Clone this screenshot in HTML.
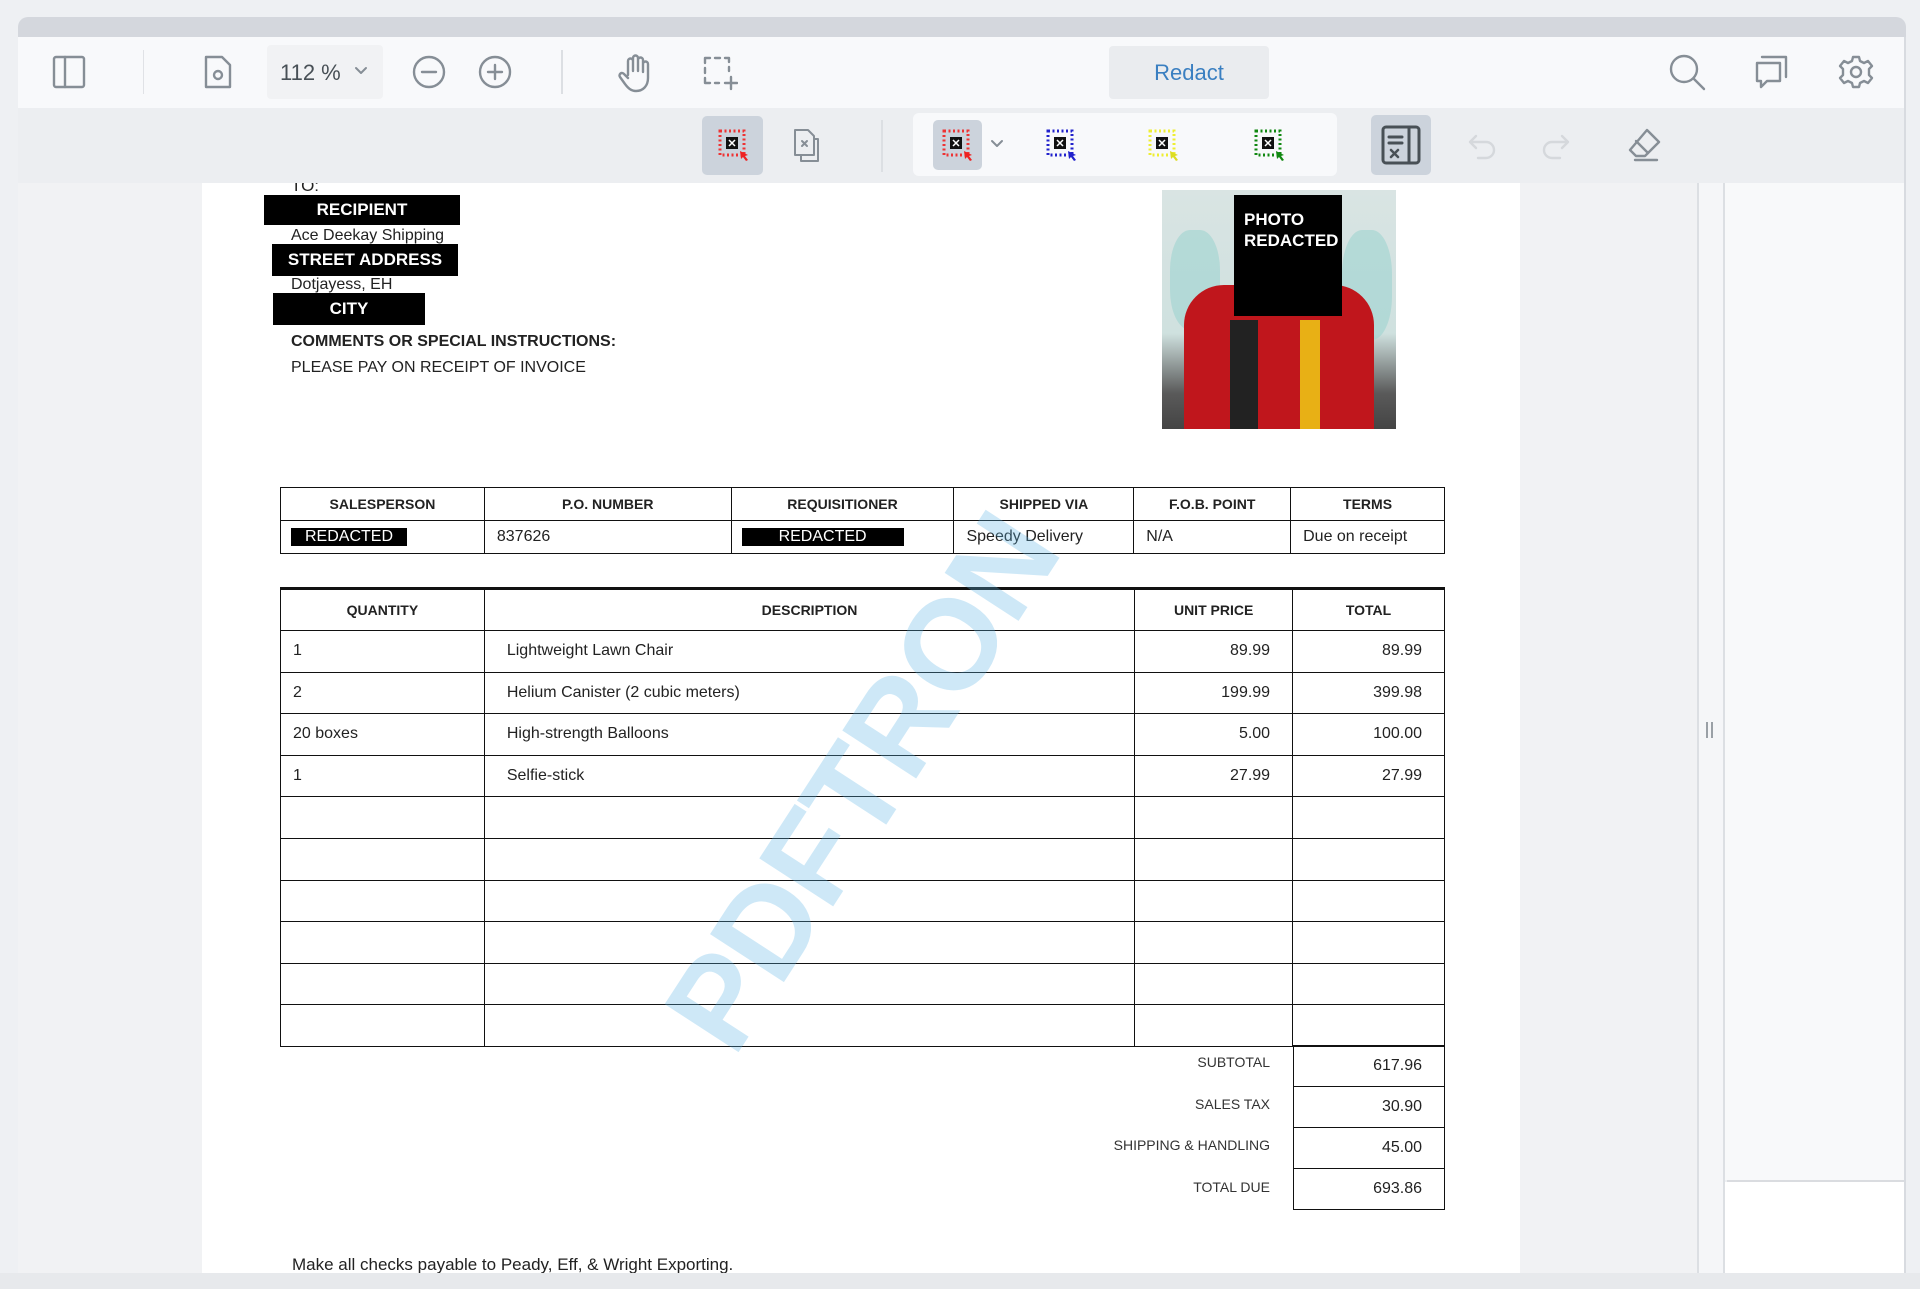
<!DOCTYPE html>
<html><head><meta charset="utf-8">
<style>
*{box-sizing:border-box;margin:0;padding:0}
body{width:1920px;height:1289px;overflow:hidden;background:#eef0f3;font-family:"Liberation Sans",sans-serif;position:relative}
.abs{position:absolute}
.strip{left:18px;top:17px;width:1888px;height:22px;background:#d4d7dd;border-radius:10px 10px 0 0}
.header{left:18px;top:37px;width:1888px;height:71px;background:#f8f9fb}
.bar2{left:18px;top:108px;width:1888px;height:75px;background:#eceef1}
.view{left:18px;top:183px;width:1679px;height:1090px;background:#f1f2f4}
.page{left:202px;top:183px;width:1318px;height:1090px;background:#fff;overflow:hidden}
.bottom{left:0;top:1273px;width:1920px;height:16px;background:#e7e9ec}
svg.ic{position:absolute;fill:none;stroke:#868e96;stroke-width:2.4;stroke-linecap:round;stroke-linejoin:round}
.doc{position:absolute;color:#222;font-size:16px;white-space:nowrap}
.red{position:absolute;background:#000;color:#fff;font-weight:bold;font-size:17px;text-align:center}
table{position:absolute;border-collapse:collapse;font-size:16px;color:#222}
td{border:1.5px solid #111;padding:0}
th{border:1.5px solid #111;font-size:14px;font-weight:bold;text-align:center}
.r{text-align:right;padding-right:22px}
.l{padding-left:12px}
.d{padding-left:22px}
</style></head><body>
<div class="abs strip"></div>
<div class="abs header"></div>
<div class="abs bar2"></div>
<div class="abs view"></div>

<svg class="ic" style="left:52px;top:55px" width="34" height="34" viewBox="0 0 34 34"><rect x="2" y="2" width="30" height="30" rx="2"/><line x1="13" y1="2" x2="13" y2="32"/></svg>
<div class="abs" style="left:143px;top:50px;width:1px;height:44px;background:#e0e2e6"></div>
<svg class="ic" style="left:203px;top:54px" width="30" height="36" viewBox="0 0 30 36"><path d="M3 3h16l8 8v22H3z"/><circle cx="15" cy="21" r="4"/></svg>
<div class="abs" style="left:267px;top:45px;width:116px;height:54px;background:#f1f2f4;border-radius:4px"></div>
<div class="abs" style="left:280px;top:60px;font-size:22px;color:#485056">112 %</div>
<svg class="ic" style="left:354px;top:66px;stroke-width:2" width="14" height="10" viewBox="0 0 14 10"><path d="M2 2l5 5 5-5"/></svg>
<svg class="ic" style="left:412px;top:55px" width="34" height="34" viewBox="0 0 34 34"><circle cx="17" cy="17" r="15"/><line x1="10" y1="17" x2="24" y2="17"/></svg>
<svg class="ic" style="left:478px;top:55px" width="34" height="34" viewBox="0 0 34 34"><circle cx="17" cy="17" r="15"/><line x1="10" y1="17" x2="24" y2="17"/><line x1="17" y1="10" x2="17" y2="24"/></svg>
<div class="abs" style="left:561px;top:50px;width:2px;height:44px;background:#dcdfe3"></div>
<svg class="ic" style="left:618px;top:53px" width="36" height="40" viewBox="0 0 36 40"><path d="M10 22V8a2.5 2.5 0 015 0v10V5a2.5 2.5 0 015 0v13V7a2.5 2.5 0 015 0v12V11a2.5 2.5 0 015 0v14c0 8-5 13-12 13-5 0-8-3-11-7l-5-7a2.5 2.5 0 014-3l4 4"/></svg>
<svg class="ic" style="left:702px;top:55px" width="36" height="36" viewBox="0 0 36 36"><path d="M3 8V3h5M13 3h5M23 3h4v4M27 12v4M3 13v5M3 23v5h5M13 28h4M29 22v12M23 28h12"/></svg>
<div class="abs" style="left:1109px;top:46px;width:160px;height:53px;background:#eaecef;border-radius:4px"></div>
<div class="abs" style="left:1109px;top:60px;width:160px;text-align:center;font-size:22px;color:#3a7fc1">Redact</div>
<svg class="ic" style="left:1668px;top:53px" width="40" height="40" viewBox="0 0 40 40"><circle cx="16" cy="16" r="13"/><line x1="26" y1="26" x2="36" y2="36"/></svg>
<svg class="ic" style="left:1754px;top:54px" width="36" height="36" viewBox="0 0 36 36"><path d="M8 3h24v20"/><path d="M3 9h23v18H13l-6 6v-6H3z"/></svg>
<svg class="ic" style="left:1838px;top:54px" width="36" height="36" viewBox="0 0 36 36"><circle cx="18" cy="18" r="5"/><path d="M15 3h6l1 4 4 2 4-2 4 5-3 3v6l3 3-4 5-4-2-4 2-1 4h-6l-1-4-4-2-4 2-4-5 3-3v-6l-3-3 4-5 4 2 4-2z"/></svg>

<div class="abs" style="left:702px;top:116px;width:61px;height:59px;background:#ccd3dc;border-radius:5px"></div>
<svg class="abs" style="left:718px;top:129px" width="32" height="34" viewBox="0 0 32 34"><rect x="2" y="2" width="24" height="24" fill="none" stroke="#e33" stroke-width="3" stroke-dasharray="2 2.5"/><rect x="8" y="8" width="12" height="12" fill="#111"/><path d="M11 11l6 6M17 11l-6 6" stroke="#fff" stroke-width="1.5"/><path d="M22 22l8 4-3 1 3 4-2 1-3-4-2 2z" fill="#e22"/></svg>
<svg class="ic" style="left:792px;top:127px;stroke-width:2" width="30" height="36" viewBox="0 0 30 36"><path d="M3 3h13l6 6v19H3z"/><path d="M22 12h4v22H9v-5"/><path d="M10 14l5 5M15 14l-5 5"/></svg>
<div class="abs" style="left:881px;top:120px;width:2px;height:52px;background:#dcdfe3"></div>
<div class="abs" style="left:913px;top:113px;width:424px;height:63px;background:#f8f9fb;border-radius:6px"></div>
<div class="abs" style="left:933px;top:120px;width:49px;height:50px;background:#ccd3dc;border-radius:5px"></div>
<svg class="abs" style="left:942px;top:129px" width="32" height="34" viewBox="0 0 32 34"><rect x="2" y="2" width="24" height="24" fill="none" stroke="#e33" stroke-width="3" stroke-dasharray="2 2.5"/><rect x="8" y="8" width="12" height="12" fill="#111"/><path d="M11 11l6 6M17 11l-6 6" stroke="#fff" stroke-width="1.5"/><path d="M22 22l8 4-3 1 3 4-2 1-3-4-2 2z" fill="#e22"/></svg>
<svg class="ic" style="left:990px;top:139px;stroke-width:2" width="14" height="10" viewBox="0 0 14 10"><path d="M2 2l5 5 5-5"/></svg>
<svg class="abs" style="left:1046px;top:129px" width="32" height="34" viewBox="0 0 32 34"><rect x="2" y="2" width="24" height="24" fill="none" stroke="#22c" stroke-width="3" stroke-dasharray="2 2.5"/><rect x="8" y="8" width="12" height="12" fill="#111"/><path d="M11 11l6 6M17 11l-6 6" stroke="#fff" stroke-width="1.5"/><path d="M22 22l8 4-3 1 3 4-2 1-3-4-2 2z" fill="#22c"/></svg>
<svg class="abs" style="left:1148px;top:129px" width="32" height="34" viewBox="0 0 32 34"><rect x="2" y="2" width="24" height="24" fill="none" stroke="#ee3" stroke-width="3" stroke-dasharray="2 2.5"/><rect x="8" y="8" width="12" height="12" fill="#111"/><path d="M11 11l6 6M17 11l-6 6" stroke="#fff" stroke-width="1.5"/><path d="M22 22l8 4-3 1 3 4-2 1-3-4-2 2z" fill="#dd2"/></svg>
<svg class="abs" style="left:1254px;top:129px" width="32" height="34" viewBox="0 0 32 34"><rect x="2" y="2" width="24" height="24" fill="none" stroke="#181" stroke-width="3" stroke-dasharray="2 2.5"/><rect x="8" y="8" width="12" height="12" fill="#111"/><path d="M11 11l6 6M17 11l-6 6" stroke="#fff" stroke-width="1.5"/><path d="M22 22l8 4-3 1 3 4-2 1-3-4-2 2z" fill="#181"/></svg>
<div class="abs" style="left:1371px;top:115px;width:60px;height:60px;background:#ccd3dc;border-radius:5px"></div>
<svg class="ic" style="left:1381px;top:125px;stroke:#485056;stroke-width:3" width="40" height="40" viewBox="0 0 40 40"><rect x="2" y="2" width="36" height="36" rx="3"/><line x1="28" y1="2" x2="28" y2="38"/><line x1="8" y1="12" x2="21" y2="12"/><line x1="8" y1="18" x2="21" y2="18"/><path d="M10 25l7 7M17 25l-7 7" stroke-width="2.5"/></svg>
<svg class="ic" style="left:1462px;top:132px;stroke:#d5d8dc" width="34" height="28" viewBox="0 0 34 28"><path d="M8 10h16a8 8 0 010 16h-8M8 10l6-6M8 10l6 6"/></svg>
<svg class="ic" style="left:1542px;top:132px;stroke:#d5d8dc" width="34" height="28" viewBox="0 0 34 28"><path d="M26 10H10a8 8 0 000 16h8M26 10l-6-6M26 10l-6 6"/></svg>
<svg class="ic" style="left:1627px;top:127px" width="36" height="36" viewBox="0 0 36 36"><path d="M20 3l12 12-14 14H9l-6-6z"/><path d="M9 14l12 12"/><line x1="8" y1="33" x2="30" y2="33"/></svg>

<div class="abs" style="left:1697px;top:183px;width:2px;height:1090px;background:#dcdfe3"></div>
<div class="abs" style="left:1699px;top:183px;width:24px;height:1090px;background:#f5f6f8"></div>
<div class="abs" style="left:1706px;top:722px;width:2px;height:16px;background:#9aa0a6"></div>
<div class="abs" style="left:1711px;top:722px;width:2px;height:16px;background:#9aa0a6"></div>
<div class="abs" style="left:1723px;top:183px;width:2px;height:1090px;background:#dcdfe3"></div>
<div class="abs" style="left:1725px;top:183px;width:180px;height:997px;background:#f8f9fa"></div>
<div class="abs" style="left:1727px;top:1180px;width:178px;height:2px;background:#dadce0"></div>
<div class="abs" style="left:1725px;top:1182px;width:180px;height:91px;background:#fff"></div>
<div class="abs" style="left:1904px;top:37px;width:2px;height:1236px;background:#d8dbe0"></div>

<div class="abs page">
  <div style="position:absolute;left:-202px;top:-183px;width:1920px;height:1289px">
  <div class="doc" style="left:291px;top:176px;font-size:17px">TO:</div>
  <div class="red" style="left:264px;top:195px;width:196px;height:30px;line-height:30px">RECIPIENT</div>
  <div class="doc" style="left:291px;top:227px">Ace Deekay Shipping</div>
  <div class="red" style="left:272px;top:244px;width:186px;height:32px;line-height:32px">STREET ADDRESS</div>
  <div class="doc" style="left:291px;top:276px">Dotjayess, EH</div>
  <div class="red" style="left:273px;top:293px;width:152px;height:32px;line-height:32px">CITY</div>
  <div class="doc" style="left:291px;top:333px;font-weight:bold">COMMENTS OR SPECIAL INSTRUCTIONS:</div>
  <div class="doc" style="left:291px;top:359px">PLEASE PAY ON RECEIPT OF INVOICE</div>

  <div class="abs" style="left:1162px;top:190px;width:234px;height:239px;background:linear-gradient(#d9e4e3 0%,#cfe1df 60%,#5a5a5a 85%,#444 100%);overflow:hidden">
    <div class="abs" style="left:8px;top:40px;width:50px;height:100px;background:#9fd4d0;opacity:.6;border-radius:40%"></div>
    <div class="abs" style="left:180px;top:40px;width:50px;height:110px;background:#9fd4d0;opacity:.6;border-radius:40%"></div>
    <div class="abs" style="left:22px;top:95px;width:190px;height:160px;background:#c0161c;border-radius:40px 40px 0 0"></div>
    <div class="abs" style="left:68px;top:130px;width:28px;height:120px;background:#222"></div>
    <div class="abs" style="left:138px;top:130px;width:20px;height:120px;background:#e8b015"></div>
  </div>
  <div class="red" style="left:1234px;top:195px;width:108px;height:121px;text-align:left;padding:14px 0 0 10px;line-height:21px;font-size:17px">PHOTO<br>REDACTED</div>

  <table style="left:280px;top:487px;width:1165px">
    <tr style="height:33px"><th style="width:204px">SALESPERSON</th><th style="width:247px">P.O. NUMBER</th><th style="width:223px">REQUISITIONER</th><th style="width:180px">SHIPPED VIA</th><th style="width:157px">F.O.B. POINT</th><th style="width:154px">TERMS</th></tr>
    <tr style="height:33px"><td style="padding-left:10px"><span style="background:#000;color:#fff;display:inline-block;width:116px;text-align:center;font-size:16px">REDACTED</span></td><td class="l">837626</td><td style="padding-left:10px"><span style="background:#000;color:#fff;display:inline-block;width:162px;text-align:center;font-size:16px">REDACTED</span></td><td class="l">Speedy Delivery</td><td class="l">N/A</td><td class="l">Due on receipt</td></tr>
  </table>

  <table style="left:280px;top:587px;width:1165px;border-top:3px solid #111">
    <tr style="height:42px"><th style="width:204px">QUANTITY</th><th style="width:651px">DESCRIPTION</th><th style="width:158px">UNIT PRICE</th><th style="width:152px">TOTAL</th></tr>
    <tr style="height:41.6px"><td class="l">1</td><td class="d">Lightweight Lawn Chair</td><td class="r">89.99</td><td class="r">89.99</td></tr>
    <tr style="height:41.6px"><td class="l">2</td><td class="d">Helium Canister (2 cubic meters)</td><td class="r">199.99</td><td class="r">399.98</td></tr>
    <tr style="height:41.6px"><td class="l">20 boxes</td><td class="d">High-strength Balloons</td><td class="r">5.00</td><td class="r">100.00</td></tr>
    <tr style="height:41.6px"><td class="l">1</td><td class="d">Selfie-stick</td><td class="r">27.99</td><td class="r">27.99</td></tr>
    <tr style="height:41.6px"><td></td><td></td><td></td><td></td></tr>
    <tr style="height:41.6px"><td></td><td></td><td></td><td></td></tr>
    <tr style="height:41.6px"><td></td><td></td><td></td><td></td></tr>
    <tr style="height:41.6px"><td></td><td></td><td></td><td></td></tr>
    <tr style="height:41.6px"><td></td><td></td><td></td><td></td></tr>
    <tr style="height:41.6px"><td></td><td></td><td></td><td></td></tr>
  </table>

  <table style="left:1293px;top:1045px;width:152px">
    <tr style="height:41px"><td class="r">617.96</td></tr>
    <tr style="height:41px"><td class="r">30.90</td></tr>
    <tr style="height:41px"><td class="r">45.00</td></tr>
    <tr style="height:41px"><td class="r">693.86</td></tr>
  </table>
  <div class="doc" style="left:900px;top:1054px;width:370px;text-align:right;font-size:14px;color:#333">SUBTOTAL</div>
  <div class="doc" style="left:900px;top:1096px;width:370px;text-align:right;font-size:14px;color:#333">SALES TAX</div>
  <div class="doc" style="left:900px;top:1137px;width:370px;text-align:right;font-size:14px;color:#333">SHIPPING &amp; HANDLING</div>
  <div class="doc" style="left:900px;top:1179px;width:370px;text-align:right;font-size:14px;color:#333">TOTAL DUE</div>

  <div class="doc" style="left:292px;top:1255px;font-size:17px">Make all checks payable to Peady, Eff, &amp; Wright Exporting.</div>

  <div class="abs" style="left:862px;top:782px;transform:translate(-50%,-50%) rotate(-57deg);font-size:128px;font-weight:bold;color:#5fb6e6;opacity:.3;letter-spacing:-2px;white-space:nowrap">PDFTRON</div>
  </div>
</div>

<div class="abs bottom"></div>
</body></html>
